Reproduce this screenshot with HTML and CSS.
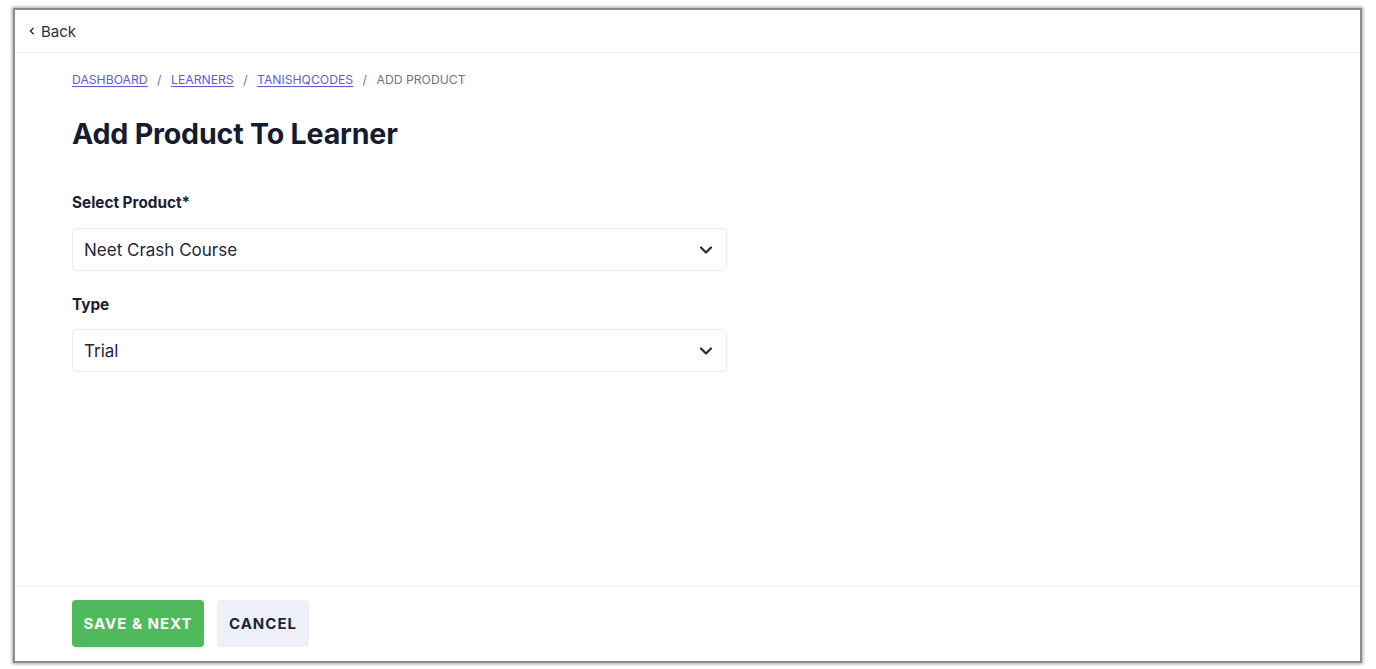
FILE: index.html
```html
<!DOCTYPE html>
<html lang="en">
<head>
<meta charset="utf-8">
<title>Add Product To Learner</title>
<link rel="stylesheet" href="styles.css">
</head>
<body>
<div class="window">
  <header class="topbar">
    <a class="back" href="#">
      <svg class="back-icon" viewBox="0 0 10 10" width="8" height="8"><path d="M6.5 1.5 3 5l3.5 3.5" fill="none" stroke="currentColor" stroke-width="1.8" stroke-linecap="round" stroke-linejoin="round"/></svg>
      <span>Back</span>
    </a>
  </header>
  <main class="content">
    <nav class="crumbs">
      <a href="#">DASHBOARD</a><span class="sep">/</span>
      <a href="#">LEARNERS</a><span class="sep">/</span>
      <a href="#">TANISHQCODES</a><span class="sep">/</span>
      <span class="current">ADD PRODUCT</span>
    </nav>
    <h1 class="title">Add Product To Learner</h1>
    <div class="field">
      <label class="label">Select Product*</label>
      <div class="select">
        <span>Neet Crash Course</span>
        <svg class="chev" viewBox="0 0 14 10" width="14" height="10"><path d="M2 2.5 7 7.5l5-5" fill="none" stroke="currentColor" stroke-width="2.2" stroke-linecap="round" stroke-linejoin="round"/></svg>
      </div>
    </div>
    <div class="field">
      <label class="label">Type</label>
      <div class="select">
        <span>Trial</span>
        <svg class="chev" viewBox="0 0 14 10" width="14" height="10"><path d="M2 2.5 7 7.5l5-5" fill="none" stroke="currentColor" stroke-width="2.2" stroke-linecap="round" stroke-linejoin="round"/></svg>
      </div>
    </div>
  </main>
  <footer class="footer">
    <button class="btn btn-primary">SAVE &amp; NEXT</button>
    <button class="btn btn-secondary">CANCEL</button>
  </footer>
</div>
</body>
</html>
```
FILE: styles.css
```css
html, body {
  margin: 0;
  padding: 0;
  background: #ffffff;
}
body {
  font-family: Inter, "Noto Sans", sans-serif;
  color: #1b2036;
  height: 669px;
  overflow: hidden;
}
.window {
  box-sizing: border-box;
  margin: 8px 14px 0 13px;
  height: 655px;
  border: 2px solid #8c8c8c;
  box-shadow: 0 0 3px 1px rgba(0, 0, 0, 0.35);
  background: #fff;
  display: flex;
  flex-direction: column;
}
.topbar {
  height: 42px;
  border-bottom: 1px solid #eef0f6;
  display: flex;
  align-items: center;
  padding-left: 13px;
  flex-shrink: 0;
}
.back {
  display: flex;
  align-items: center;
  gap: 5px;
  color: #2a2f40;
  text-decoration: none;
  font-size: 15px;
}
.back-icon { display: block; }
.content {
  flex: 1;
  padding: 17px 0 0 57px;
}
.crumbs {
  font-size: 12.2px;
  line-height: 20px;
  color: #6b7280;
  display: flex;
  align-items: center;
}
.crumbs a {
  color: #5a5cf0;
  text-decoration: underline;
  text-underline-offset: 2px;
}
.crumbs .sep {
  margin: 0 9.5px;
  color: #6b7280;
}
.crumbs .current { color: #707582; }
.title {
  margin: 26px 0 0;
  font-size: 28.6px;
  line-height: 36px;
  font-weight: 700;
  color: #161b30;
  letter-spacing: -0.2px;
}
.field { width: 655px; }
.title + .field { margin-top: 41px; }
.field + .field { margin-top: 24px; }
.label {
  display: block;
  font-size: 15.3px;
  line-height: 20px;
  font-weight: 700;
  color: #1b2036;
}
.select {
  margin-top: 15px;
  box-sizing: border-box;
  height: 43px;
  border: 1px solid #e9ecf2;
  border-radius: 4px;
  display: flex;
  align-items: center;
  justify-content: space-between;
  padding: 0 13px 0 11px;
  font-size: 17px;
  color: #22273a;
}
.field + .field .select { margin-top: 14px; }
.chev { display: block; color: #1f2a44; }
.footer {
  flex-shrink: 0;
  border-top: 1px solid #eef0f6;
  padding: 13px 0 14px 57px;
  display: flex;
  gap: 13px;
}
.btn {
  height: 47px;
  border: none;
  border-radius: 4px;
  font-family: Inter, "Noto Sans", sans-serif;
  font-size: 15px;
  font-weight: 700;
  letter-spacing: 1px;
  cursor: pointer;
}
.btn-primary {
  width: 132px;
  background: #4fba5c;
  color: #ffffff;
}
.btn-secondary {
  width: 92px;
  background: #edf0f7;
  color: #1e2338;
}
```
